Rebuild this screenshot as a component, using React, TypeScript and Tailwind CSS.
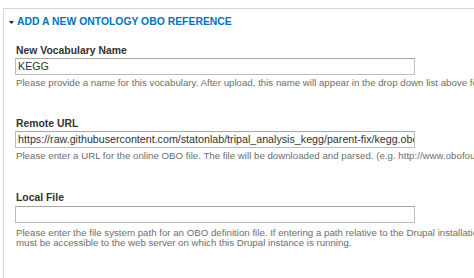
import React from 'react';

const font = { fontFamily: '"Liberation Sans", Arial, sans-serif' };

interface FieldProps {
  label: string;
  value?: string;
  children: React.ReactNode;
  className?: string;
  inputGap?: string;
  descGap?: string;
}

const Field: React.FC<FieldProps> = ({ label, value, children, className, inputGap = 'mt-[1px]', descGap = 'mt-[3px]' }) => (
  <div className={className}>
    <div className="text-[10.4px] leading-[13px] font-bold text-[#333] whitespace-nowrap">{label}</div>
    <div
      className={`${inputGap} ml-[-1px] w-[400px] h-[17px] border border-[#bdbdbd] border-t-[#a8a8a8] bg-white px-[2px] text-[10.7px] leading-[15px] text-[#333] whitespace-nowrap overflow-hidden`}
    >
      {value}
    </div>
    <div className={`${descGap} text-[9.7px] leading-[10px] text-[#6e6e6e] whitespace-nowrap`}>{children}</div>
  </div>
);

export default function App() {
  return (
    <div className="w-[474px] h-[278px] overflow-hidden bg-white pt-[8px] pl-[3px]" style={font}>
      <div className="w-[500px] h-[300px] border-t border-l border-[#d4d4d4]">
        <div className="flex items-center pl-[5px] pt-[6px] h-[19px]">
          <svg width="5" height="3" viewBox="0 0 5 3" className="mr-[3px] mt-[1px]">
            <path d="M0 0 L5 0 L2.5 3 Z" fill="#222" />
          </svg>
          <span className="text-[10.4px] leading-[13px] font-bold text-[#0074bd] uppercase whitespace-nowrap">
            Add a new ontology OBO reference
          </span>
        </div>
        <div className="pl-[12px]">
          <Field label="New Vocabulary Name" value="KEGG" className="mt-[16px]">
            Please provide a name for this vocabulary. After upload, this name will appear in the drop down list above for
          </Field>
          <Field
            label="Remote URL"
            value="https://raw.githubusercontent.com/statonlab/tripal_analysis_kegg/parent-fix/kegg.obo"
            className="mt-[29px]"
          >
            Please enter a URL for the online OBO file. The file will be downloaded and parsed. (e.g. http://www.obofoundry.org)
          </Field>
          <Field label="Local File" className="mt-[30px]" inputGap="mt-[2px]" descGap="mt-[5px]">
            <div>
              Please enter the file system path for an OBO definition file. If entering a path relative to the Drupal installation
            </div>
            <div>must be accessible to the web server on which this Drupal instance is running.</div>
          </Field>
        </div>
      </div>
    </div>
  );
}
